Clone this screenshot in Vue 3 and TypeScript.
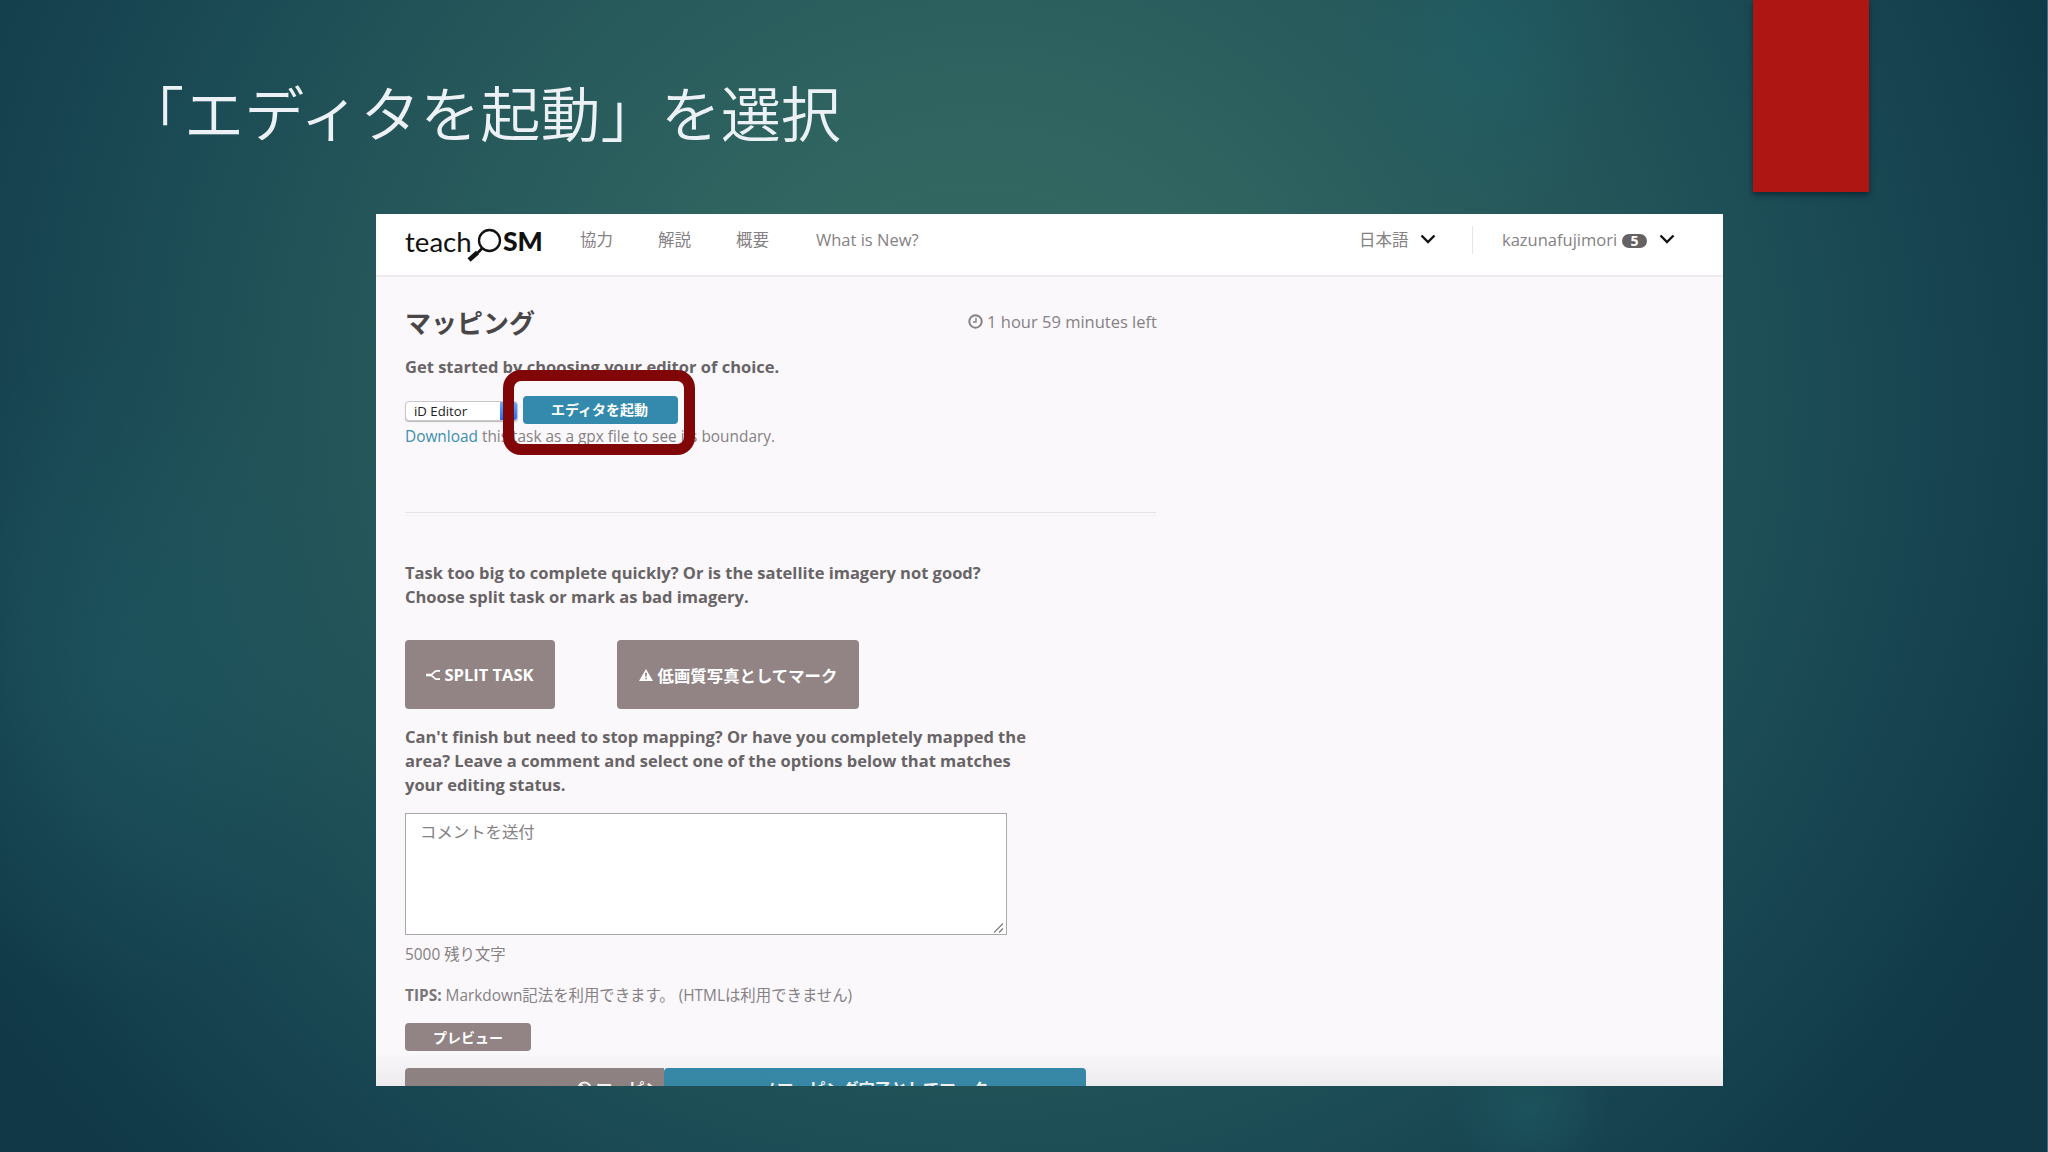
<script setup lang="ts">
const navItems: { label: string; width: number }[] = [
  { label: '協力', width: 78 },
  { label: '解説', width: 78 },
  { label: '概要', width: 80 },
  { label: 'What is New?', width: 110 },
]
</script>

<template>
  <div class="slide">
    <h1 class="slide-title">「エディタを起動」を選択</h1>
    <div class="ribbon"></div>
    <div class="edge"></div>

    <main class="panel">
      <header class="header">
        <div class="logo">
          <span class="teach">teach</span>
          <svg class="lens" width="38" height="34" viewBox="0 0 38 34">
            <circle cx="24.5" cy="12.5" r="10.5" fill="none" stroke="#111" stroke-width="2.3" />
            <path d="M17 20.5L12 25.5" stroke="#111" stroke-width="2.6" />
            <path d="M12.5 24.5L4 32" stroke="#111" stroke-width="4.6" />
          </svg>
          <span class="sm">SM</span>
        </div>
        <nav class="nav">
          <a v-for="item in navItems" :key="item.label" :style="{ width: item.width + 'px' }">{{ item.label }}</a>
        </nav>
        <div class="language">
          <span>日本語</span>
          <svg class="chevron" width="16" height="10" viewBox="0 0 16 10"><path d="M1.5 1.5L8 8L14.5 1.5" /></svg>
        </div>
        <div class="user">
          <span class="username">kazunafujimori</span>
          <span class="badge">5</span>
          <svg class="chevron" width="16" height="10" viewBox="0 0 16 10"><path d="M1.5 1.5L8 8L14.5 1.5" /></svg>
        </div>
      </header>

      <section class="content">
        <div class="heading">
          <h2>マッピング</h2>
          <div class="timer">
            <svg width="15" height="15" viewBox="0 0 15 15" fill="none" stroke="#858184">
              <circle cx="7.5" cy="7.5" r="6.2" stroke-width="2" />
              <path d="M8 3.8V8H5" stroke-width="1.4" />
            </svg>
            <span>1 hour 59 minutes left</span>
          </div>
        </div>

        <p class="strong start">Get started by choosing your editor of choice.</p>
        <div class="editor-row">
          <div class="select"><span>iD Editor</span><i></i></div>
          <button class="launch">エディタを起動</button>
          <div class="highlight"></div>
        </div>
        <p class="download"><a>Download</a> this task as a gpx file to see its boundary.</p>
        <div class="rule"></div>

        <p class="strong split-text">Task too big to complete quickly? Or is the satellite imagery not good?<br />Choose split task or mark as bad imagery.</p>
        <div class="split-row">
          <button class="split">
            <svg width="15" height="12" viewBox="0 0 15 12" fill="none" stroke="#fff" stroke-width="1.8">
              <path stroke-width="2.6" d="M0 6H4.5" />
              <path d="M14 1.8H10.5C8 1.8 7 6 4 6C7 6 8 10.2 10.5 10.2H14" />
            </svg>
            <span>SPLIT TASK</span>
          </button>
          <button class="bad">
            <svg width="14" height="12" viewBox="0 0 14 12">
              <path fill="#fff" fill-rule="evenodd" d="M7 0L14 12H0ZM6 3.8L6.3 7.8H7.7L8 3.8ZM6.2 8.7V10.3H7.8V8.7Z" />
            </svg>
            <span>低画質写真としてマーク</span>
          </button>
        </div>

        <p class="strong finish-text">Can't finish but need to stop mapping? Or have you completely mapped the<br />area? Leave a comment and select one of the options below that matches<br />your editing status.</p>
        <div class="comment">
          <span>コメントを送付</span>
          <svg width="10" height="10" viewBox="0 0 10 10" stroke="#777" stroke-width="1.1"><path d="M0 9.5L9 .5M5 9.5L9 5.5" /></svg>
        </div>
        <p class="remaining">5000 残り文字</p>
        <p class="tips"><b>TIPS:</b> <span>Markdown記法を利用できます。 (HTMLは利用できません)</span></p>
        <button class="preview">プレビュー</button>
        <div class="actions">
          <div class="stop">
            <svg width="15" height="15" viewBox="0 0 15 15" fill="none" stroke="#fff" stroke-width="2"><circle cx="7.5" cy="7.5" r="6" /><path d="M3.5 3.5L11.5 11.5" /></svg>
            <span>マッピン</span>
          </div>
          <div class="done">
            <svg width="9" height="15" viewBox="0 0 9 15" fill="none" stroke="#fff" stroke-width="2.2"><path d="M0 7L2 10L5 2" /></svg>
            <span>マッピング完了としてマーク</span>
          </div>
        </div>
      </section>
      <div class="fade"></div>
    </main>
  </div>
</template>

<style>
body { margin: 0; }
</style>

<style scoped>
* { box-sizing: border-box; }
.slide {
  position: relative;
  width: 2048px;
  height: 1152px;
  overflow: hidden;
  padding: 71px 0 0;
  font-family: "Open Sans", "Noto Sans CJK JP", sans-serif;
  background:
    radial-gradient(ellipse 150px 170px at 1485px 45px, rgba(27, 99, 110, .42), transparent),
    radial-gradient(ellipse 80px 70px at 1530px 1110px, rgba(36, 106, 110, .35), transparent),
    radial-gradient(ellipse 260px 330px at 120px 670px, rgba(37, 105, 112, .3), transparent),
    radial-gradient(ellipse 1180px 1120px at 980px 400px, #33695f 0%, #306561 24%, #25575a 52%, #194853 76%, #103847 100%);
}
h1, h2, p { margin: 0; }
.slide-title {
  height: 143px;
  padding-left: 124px;
  color: #ecf1f5;
  font: 350 60.1px/80px "Noto Sans CJK JP DemiLight", "Noto Sans CJK JP", sans-serif;
  white-space: nowrap;
}
.ribbon {
  position: absolute;
  left: 1753px;
  top: 0;
  width: 116px;
  height: 192px;
  background: #ae1613;
  box-shadow: 0 3px 6px rgba(0, 20, 30, .55);
}
.edge { position: absolute; right: 0; top: 0; width: 1px; height: 1152px; background: #3f7186; }
.panel {
  position: relative;
  width: 1347px;
  height: 872px;
  margin-left: 376px;
  overflow: hidden;
  background: #faf8fb;
  color: #858184;
  font-size: 16.5px;
  white-space: nowrap;
}
.header {
  display: flex;
  height: 63px;
  padding-left: 29px;
  background: #fff;
  border-bottom: 2px solid #efecf0;
}
.logo { position: relative; display: flex; width: 175px; height: 60px; color: #111; line-height: 55px; }
.teach { width: 98px; font-family: Lato, sans-serif; font-size: 27.6px; }
.lens { position: absolute; left: 60px; top: 14px; }
.sm { font: 900 26.5px/54px Lato, sans-serif; }
.nav { display: flex; width: 779px; line-height: 51px; }
.nav a { flex: none; }
.language { display: flex; width: 114px; height: 28px; margin-top: 12px; border-right: 1px solid #e6e4e6; line-height: 28px; }
.language .chevron { margin: 8px 0 0 11px; }
.user { display: flex; padding: 12px 0 0 29px; line-height: 28px; }
.username { width: 120px; }
.badge { width: 25px; height: 14px; margin-top: 8px; border-radius: 7px; background: #666263; color: #fff; text-align: center; font-size: 14px; font-weight: 700; line-height: 14px; }
.user .chevron { margin: 8px 0 0 12px; }
.chevron { fill: none; stroke: #151515; stroke-width: 2.4; }
.content { width: 780px; padding-left: 29px; }
.heading { display: flex; justify-content: space-between; height: 78px; padding-top: 27px; }
h2 { color: #494647; font-size: 26px; line-height: 38px; font-weight: 700; }
.timer { display: flex; gap: 4px; line-height: 36px; margin-right: -1px; }
.timer svg { margin-top: 10px; }
.strong { color: #686466; font-weight: 700; line-height: 24px; }
.start { height: 41px; }
.editor-row { position: relative; display: flex; height: 28px; gap: 5px; }
.select { display: flex; width: 113px; height: 20px; margin-top: 5px; justify-content: space-between; border: 1px solid #c9c7c9; border-radius: 4px; background: #fff; color: #222; box-shadow: 0 1px 1px #bbb; overflow: hidden; font: 13.2px/18px "Open Sans", sans-serif; padding-left: 8px; }
.select i { width: 17px; background: linear-gradient(#69adf9, #206df5); }
button { border: 0; border-radius: 4px; padding: 0; font: inherit; color: #fff; font-weight: 700; background: #928485; }
.launch { width: 155px; padding: 0 2px 2px 0; background: #348aac; font-size: 14px; }
.highlight { position: absolute; left: 98px; top: -26px; width: 192px; height: 85px; border: 11px solid #800608; border-radius: 18px; }
.download { height: 88px; font-size: 15.4px; line-height: 26px; }
.download a { color: #3d8eae; }
.rule { height: 4px; border-top: 1px solid #e6e3e7; border-bottom: 1px solid #f2f0f3; }
.split-text { height: 124px; padding-top: 45px; }
.split-row { display: flex; height: 69px; gap: 62px; }
.split-row button { display: flex; align-items: center; justify-content: center; }
.split { width: 150px; gap: 3px; font-size: 16.5px; }
.bad { width: 242px; gap: 5px; font-size: 16.4px; }
.finish-text { height: 104px; padding-top: 16px; }
.comment { position: relative; width: 602px; height: 122px; border: 1px solid #aaa7aa; background: #fff; padding: 5px 14px; line-height: 26px; font-size: 16.4px; }
.comment svg { position: absolute; right: 2px; bottom: 1px; }
.remaining { height: 40px; padding-top: 7px; font-size: 15.4px; line-height: 26px; }
.tips { height: 48px; padding-top: 8px; font-size: 15.4px; line-height: 26px; }
.tips b { color: #777; }
.preview { display: block; width: 126px; height: 28px; padding: 0 0 1px; font-size: 14px; }
.actions { display: flex; height: 60px; width: 681px; margin-top: 17px; color: #fff; font-weight: 700; font-size: 16.3px; line-height: 24px; }
.actions div { display: flex; padding-top: 9px; }
.actions svg { margin-top: 4px; }
.stop { width: 259px; padding-left: 172px; gap: 4px; background: #928485; border-radius: 4px 0 0; }
.done { width: 422px; padding-left: 104px; background: #348aac; border-radius: 4px 4px 0 0; }
.fade { position: absolute; left: 0; right: 0; bottom: 0; height: 34px; background: linear-gradient(transparent, rgba(90, 90, 80, .09)); }
</style>
